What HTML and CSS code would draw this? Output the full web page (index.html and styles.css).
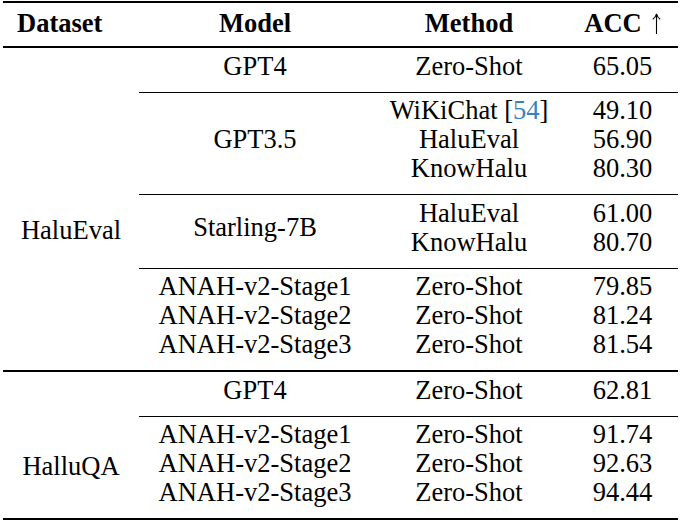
FILE: index.html
```html
<!DOCTYPE html>
<html lang="en">
<head>
<meta charset="utf-8">
<title>ANAH-v2 results</title>
<link rel="stylesheet" href="styles.css">
</head>
<body>
<div class="table">
  <div class="rule-heavy"></div>
  <div class="head">
    <div class="h-ds">Dataset</div>
    <div>Model</div>
    <div>Method</div>
    <div>ACC<svg class="arrow" width="9" height="21" viewBox="0 0 9 21"><path d="M4.5 21 V1.2 M0.8 6.2 Q3.6 4.4 4.5 0.8 Q5.4 4.4 8.2 6.2" fill="none" stroke="#000" stroke-width="1.1"/></svg></div>
  </div>
  <div class="rule-mid"></div>

  <div class="group">
    <div class="ds">HaluEval</div>
    <div class="body">
      <div class="section">
        <div class="col"><div>GPT4</div></div>
        <div class="col"><div>Zero-Shot</div></div>
        <div class="col"><div>65.05</div></div>
      </div>
      <div class="cmid"></div>
      <div class="section">
        <div class="col"><div>GPT3.5</div></div>
        <div class="col"><div>WiKiChat [<span class="cite">54</span>]</div><div>HaluEval</div><div>KnowHalu</div></div>
        <div class="col"><div>49.10</div><div>56.90</div><div>80.30</div></div>
      </div>
      <div class="cmid"></div>
      <div class="section">
        <div class="col"><div>Starling-7B</div></div>
        <div class="col"><div>HaluEval</div><div>KnowHalu</div></div>
        <div class="col"><div>61.00</div><div>80.70</div></div>
      </div>
      <div class="cmid"></div>
      <div class="section">
        <div class="col"><div>ANAH-v2-Stage1</div><div>ANAH-v2-Stage2</div><div>ANAH-v2-Stage3</div></div>
        <div class="col"><div>Zero-Shot</div><div>Zero-Shot</div><div>Zero-Shot</div></div>
        <div class="col"><div>79.85</div><div>81.24</div><div>81.54</div></div>
      </div>
    </div>
  </div>

  <div class="rule-mid"></div>

  <div class="group">
    <div class="ds">HalluQA</div>
    <div class="body">
      <div class="section">
        <div class="col"><div>GPT4</div></div>
        <div class="col"><div>Zero-Shot</div></div>
        <div class="col"><div>62.81</div></div>
      </div>
      <div class="cmid"></div>
      <div class="section">
        <div class="col"><div>ANAH-v2-Stage1</div><div>ANAH-v2-Stage2</div><div>ANAH-v2-Stage3</div></div>
        <div class="col"><div>Zero-Shot</div><div>Zero-Shot</div><div>Zero-Shot</div></div>
        <div class="col"><div>91.74</div><div>92.63</div><div>94.44</div></div>
      </div>
    </div>
  </div>
  <div class="rule-heavy"></div>
</div>
</body>
</html>
```

FILE: styles.css
```css
* {
  box-sizing: border-box;
  margin: 0;
  padding: 0;
}

html, body {
  background: #ffffff;
}

body {
  margin: 0;
  font-family: "Liberation Serif", "Times New Roman", serif;
  font-size: 26.5px;
  color: #000000;
}

.table {
  width: 675px;
  margin: 1px 0 0 3px;
}

.rule-heavy {
  height: 2px;
  background: #000000;
}

.rule-mid {
  height: 2px;
  background: #000000;
}

.head {
  display: grid;
  grid-template-columns: 136px 232px 196px 111px;
  padding: 5.5px 0 8.5px;
  line-height: 29px;
  font-weight: bold;
  text-align: center;
  white-space: nowrap;
}

.head .h-ds {
  text-align: left;
  padding-left: 14px;
}

.arrow {
  margin-left: 10px;
  vertical-align: -2px;
}

.group {
  display: grid;
  grid-template-columns: 136px 539px;
}

.ds {
  display: flex;
  align-items: center;
  justify-content: center;
  padding-top: 42px;
  line-height: 29px;
  white-space: nowrap;
}

.section {
  display: grid;
  grid-template-columns: 232px 196px 111px;
  padding: 3.5px 0 11px;
  line-height: 29px;
  text-align: center;
  white-space: nowrap;
}

.col {
  display: flex;
  flex-direction: column;
  justify-content: center;
}

.cmid {
  height: 1px;
  background: #000000;
}

.cite {
  color: #3a80bd;
}
```
